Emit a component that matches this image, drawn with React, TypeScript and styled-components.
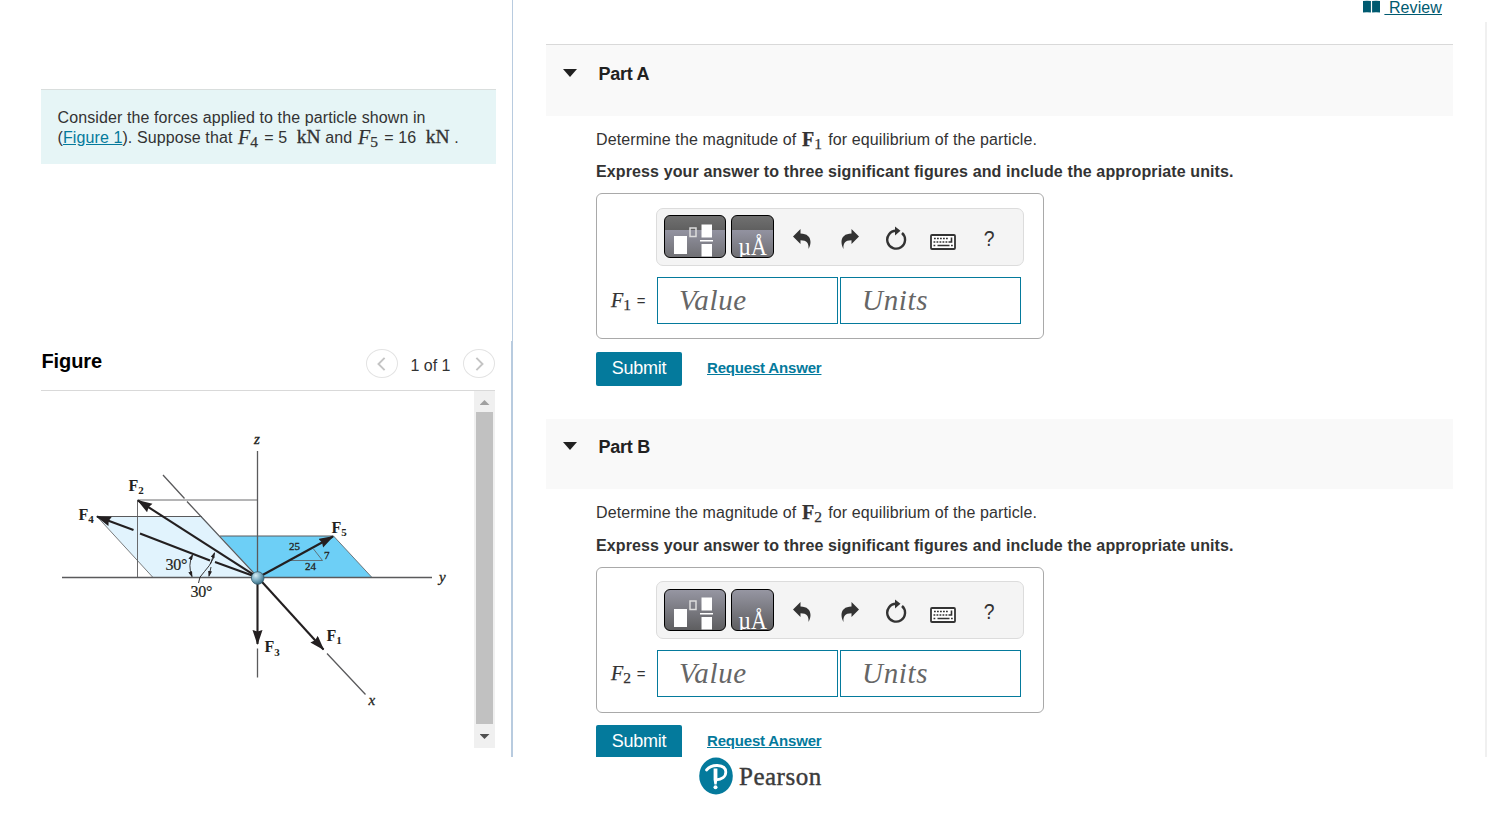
import { createGlobalStyle, styled } from 'styled-components'

const sans = `'Liberation Sans', Arial, sans-serif`
const serif = `'Liberation Serif', 'Times New Roman', serif`

const parts = [
	{ id: 'A', index: 1 },
	{ id: 'B', index: 2 },
]

function App() {
	return (
		<Page>
			<GlobalStyle />
			<Main>
				<Left>
					<Problem>
						<Statement>
							<Line>Consider the forces applied to the particle shown in</Line>
							<Line>
								(<Link href="#figure">Figure 1</Link>). Suppose that{' '}
								<Variable index={4} /> = 5 <Unit>kN</Unit> and{' '}
								<Variable index={5} /> = 16 <Unit>kN</Unit> .
							</Line>
						</Statement>
					</Problem>
					<FigurePane id="figure">
						<FigureHeader>
							<FigureTitle>Figure</FigureTitle>
							<Pager>
								<PageButton aria-label="Previous figure">
									<Chevron d="M11 2 4 9l7 7" />
								</PageButton>
								<PageCount>1 of 1</PageCount>
								<PageButton aria-label="Next figure">
									<Chevron d="M5 2l7 7-7 7" />
								</PageButton>
							</Pager>
						</FigureHeader>
						<FigureBody>
							<ForceDiagram />
							<Scrollbar>
								<Arrow $up />
								<Thumb />
								<Arrow />
							</Scrollbar>
						</FigureBody>
					</FigurePane>
				</Left>
				<Right>
					<Content>
						<ReviewRow>
							<BookIcon />
							<ReviewLink href="#review">&nbsp;Review</ReviewLink>
						</ReviewRow>
						{parts.map((part) => (
							<Part key={part.id} id={part.id} index={part.index} />
						))}
					</Content>
					<Edge />
				</Right>
			</Main>
			<Footer>
				<PearsonLogo />
				<Brand>Pearson</Brand>
			</Footer>
		</Page>
	)
}

export default App

function Variable({ index }: { index: number }) {
	return (
		<MathText>
			<i>F</i>
			<sub>{index}</sub>
		</MathText>
	)
}

function Chevron({ d }: { d: string }) {
	return (
		<svg width="14" height="16" viewBox="0 0 16 18">
			<path d={d} fill="none" stroke="#c4c4c4" strokeWidth="2.200" />
		</svg>
	)
}

function Part({ id, index }: { id: string; index: number }) {
	const first = index === 1

	return (
		<section>
			<PartHeader $first={first}>
				<svg width="14" height="8" viewBox="0 0 14 8">
					<path d="M0 0h14L7 8z" fill="#212121" />
				</svg>
				<PartTitle>Part {id}</PartTitle>
			</PartHeader>
			<PartBody>
				<Question>
					Determine the magnitude of{' '}
					<MathText>
						<b>F</b>
						<sub>{index}</sub>
					</MathText>
					&nbsp;for equilibrium of the particle.
				</Question>
				<Instruction $first={first}>
					Express your answer to three significant figures and include the
					appropriate units.
				</Instruction>
				<AnswerBox $first={first}>
					<Toolbar $first={first}>
						<ToolButton $first={first} $width={62} aria-label="Templates">
							<TemplatesIcon />
						</ToolButton>
						<ToolButton $first={first} $width={43} aria-label="Symbols">
							<span>µÅ</span>
						</ToolButton>
						<ToolIcons $first={first}>
							<UndoIcon />
							<RedoIcon />
							<ResetIcon />
							<KeyboardIcon />
							<Help>?</Help>
						</ToolIcons>
					</Toolbar>
					<Fields>
						<FieldLabel>
							<Variable index={index} /> =
						</FieldLabel>
						<Field placeholder="Value" />
						<Field placeholder="Units" />
					</Fields>
				</AnswerBox>
				<Actions $first={first}>
					<Submit>Submit</Submit>
					<RequestLink href="#answer">Request Answer</RequestLink>
				</Actions>
			</PartBody>
		</section>
	)
}

function TemplatesIcon() {
	return (
		<svg width="60" height="41" viewBox="0 0 60 41">
			<path
				fill="#fff"
				d="M9 20h13v18H9zM36.500 8.500h10.500v13H36.500zM36.500 28h10.500v12.500H36.500zM35 24h13v1.500H35z"
			/>
			<path d="M25 12h6v8.500h-6z" fill="none" stroke="#ddd" strokeWidth="1.500" />
		</svg>
	)
}

function UndoIcon() {
	return (
		<svg width="18" height="20" viewBox="0 0 18 20">
			<path
				d="M0 7.500 7.500 0v4.500C14 4.500 17.500 8 17.500 13c0 2.500-.7 4.700-2 7C16 14.500 14 11.200 7.500 11.200V15z"
				fill="#333"
			/>
		</svg>
	)
}

function RedoIcon() {
	return (
		<svg width="18" height="20" viewBox="0 0 18 20">
			<path
				d="M18 7.500 10.500 0v4.500C4 4.500.5 8 .5 13c0 2.500.7 4.700 2 7C2 14.500 4 11.200 10.500 11.200V15z"
				fill="#333"
			/>
		</svg>
	)
}

function ResetIcon() {
	return (
		<ResetSvg width="22" height="24" viewBox="0 0 22 24">
			<path
				d="M17 7A8.900 8.900 0 1 1 11 4.800"
				fill="none"
				stroke="#333"
				strokeWidth="2.400"
			/>
			<path d="M10 .5 15.500 4.800 10 9.500z" fill="#333" />
		</ResetSvg>
	)
}

function KeyboardIcon() {
	return (
		<KeyboardSvg width="26" height="16" viewBox="0 0 26 16">
			<rect x="1" y="1" width="24" height="14" rx="1" fill="#fff" stroke="#333" strokeWidth="1.800" />
			<path
				d="M4 4.500h14M3.500 8h15M3.500 11.500h2M21 11.500h2"
				stroke="#333"
				strokeWidth="1.600"
				strokeDasharray="1.800 1.200"
			/>
			<path d="M7.500 11.500h12M21.500 3.500V8h-3" fill="none" stroke="#333" strokeWidth="1.600" />
		</KeyboardSvg>
	)
}

function BookIcon() {
	return (
		<svg width="17" height="14" viewBox="0 0 17 14">
			<path
				d="M0 1Q4 .3 7.900 1V12.500Q4 12 0 12.500zM9.100 1Q13 .3 17 1v11.500q-4-.5-7.900 0z"
				fill="#005a70"
			/>
		</svg>
	)
}

function PearsonLogo() {
	return (
		<svg width="34" height="38" viewBox="0 0 34 38">
			<ellipse cx="17" cy="19" rx="16.800" ry="18.400" fill="#047a9c" />
			<path
				d="M7.500 13C10.500 9.500 14.500 8.300 18.500 8.500c5.300 .3 8.300 2.800 8.300 6.600 0 4.700-4 7.500-9.800 7.800"
				fill="none"
				stroke="#fff"
				strokeWidth="2.800"
				strokeLinecap="round"
			/>
			<path d="M14.600 11.500h3.800v11l-.8 5h-2.200l-.8-5z" fill="#fff" />
			<circle cx="16.500" cy="30.300" r="2" fill="#fff" />
		</svg>
	)
}

// Three-dimensional sketch of the particle and the five forces on it
function ForceDiagram() {
	return (
		<Diagram width="433" height="357" viewBox="41 391 433 357">
			<defs>
				<marker
					id="head"
					markerUnits="userSpaceOnUse"
					markerWidth="16"
					markerHeight="12"
					refX="14"
					refY="5"
					orient="auto"
				>
					<path d="M0 0 15 5 0 10 1.500 5z" fill="#231f20" />
				</marker>
				<marker
					id="tip"
					markerUnits="userSpaceOnUse"
					markerWidth="6"
					markerHeight="4"
					refX="5"
					refY="2"
					orient="auto-start-reverse"
				>
					<path d="M0 0 6 2 0 4z" fill="#231f20" />
				</marker>
				<radialGradient id="ball" cx=".35" cy=".3" r=".75">
					<stop offset="0" stopColor="#d6edf5" />
					<stop offset=".5" stopColor="#7fb0c5" />
					<stop offset="1" stopColor="#33687f" />
				</radialGradient>
			</defs>
			<path d="M97 516.500h105l56 61H153z" fill="#e1f3fd" />
			<path d="M220 536h113.500L372 577.500H258z" fill="#6dcff6" />
			<g fill="none" stroke="#5a5a5c" strokeWidth="1.300">
				<path d="M62 577.500h370M257.500 451v126M257.500 648.500v29" />
				<path d="M163 475l21.500 23.500M187 501.500l71 76M327 653.500l38.500 41" />
				<path d="M97 516.500h105M220 536h113.500" strokeWidth="1" />
				<path d="M137.500 577V500H257" strokeWidth=".9" />
				<path d="M97 516.500l56 61M333.500 536l38.500 41.500" strokeWidth=".8" />
				<path d="M290 560.500h32.500L313.500 549" strokeWidth=".8" />
			</g>
			<g fill="none" stroke="#231f20" strokeWidth=".9">
				<path d="M192.500 555q-5 10-.5 21.500" markerStart="url(#tip)" markerEnd="url(#tip)" />
				<path d="M214.500 553q-2.500 6-4 11M211 567l-2 9" markerStart="url(#tip)" markerEnd="url(#tip)" />
				<path d="M198.500 583q0-6 6-11.500 5-5 9-13.500" />
			</g>
			<g fill="none" stroke="#231f20" strokeWidth="2.100">
				<path d="M258 577.500 138 500.500" markerEnd="url(#head)" />
				<path d="M133.500 530 97 516.500" markerEnd="url(#head)" />
				<path d="M258 577.500l-43-15.500M210 560.500l-70-27" />
				<path d="M258 577.500 333 536.500" markerEnd="url(#head)" />
				<path d="M257.500 577.500V644" markerEnd="url(#head)" />
				<path d="M258 577.500l65.500 72" markerEnd="url(#head)" />
			</g>
			<circle cx="257.700" cy="578" r="6.300" fill="url(#ball)" stroke="#31596b" strokeWidth=".8" />
			<g fontWeight="bold">
				<text x="128.500" y="491">F<tspan fontSize="11" dy="3">2</tspan></text>
				<text x="78.500" y="519.500">F<tspan fontSize="11" dy="3.500">4</tspan></text>
				<text x="331.500" y="533">F<tspan fontSize="11" dy="2.500">5</tspan></text>
				<text x="264.500" y="651.500">F<tspan fontSize="11" dy="4">3</tspan></text>
				<text x="326.500" y="640.500">F<tspan fontSize="11" dy="3">1</tspan></text>
			</g>
			<g fontStyle="italic" fontSize="15" stroke="#231f20" strokeWidth=".3">
				<text x="254" y="443.500">z</text>
				<text x="439" y="581.500">y</text>
				<text x="368.500" y="705">x</text>
			</g>
			<g stroke="#231f20" strokeWidth=".2">
				<text x="165.500" y="569.500" textLength="22">30°</text>
				<text x="190.500" y="596.500" textLength="22">30°</text>
			</g>
			<g fontSize="11" stroke="#231f20" strokeWidth=".3">
				<text x="289" y="549.500">25</text>
				<text x="305" y="570">24</text>
				<text x="324" y="558.500">7</text>
			</g>
		</Diagram>
	)
}

const GlobalStyle = createGlobalStyle`
	* {
		box-sizing: border-box;
	}
	body {
		margin: 0;
		background: #fff;
		color: #333;
		font-family: ${sans};
		font-size: 16px;
	}
`
const Page = styled.div`
	height: 827px;
	overflow: hidden;
`
const Main = styled.main`
	display: flex;
	height: 757px;
	overflow: hidden;
`
const Left = styled.aside`
	display: flex;
	flex-direction: column;
	flex: none;
	width: 513px;
`
const Problem = styled.div`
	height: 341px;
	padding: 89px 16px 0 41px;
	border-right: 1px solid #b8cbdf;
`
const Statement = styled.div`
	height: 75px;
	padding: 18px 0 0 16.500px;
	border-top: 1px solid #d9dedd;
	background: #e6f5f6;
`
const Line = styled.div`
	height: 20px;
	line-height: 20px;
	white-space: nowrap;
	letter-spacing: 0.100px;
`
const Link = styled.a`
	color: #047a9c;
`
const MathText = styled.span`
	margin: 0 1.500px 0 1px;
	font-family: ${serif};
	font-size: 20px;
	line-height: 0;
	vertical-align: -0.500px;
	-webkit-text-stroke: 0.250px #333;
	sub {
		font-size: 15.500px;
		line-height: 0;
		vertical-align: -3px;
	}
`
const Unit = styled.span`
	margin-left: 5px;
	font-family: ${serif};
	font-size: 19.500px;
	line-height: 0;
	-webkit-text-stroke: 0.300px #333;
`
const FigurePane = styled.div`
	flex: 1;
	padding: 0 16px 0 41px;
	border-right: 2px solid #b8cbdf;
`
const FigureHeader = styled.div`
	display: flex;
	justify-content: space-between;
	height: 50px;
	border-bottom: 1px solid #d9d9d9;
`
const FigureTitle = styled.h2`
	margin: 8px 0 0 0.500px;
	color: #000;
	font-size: 20px;
	letter-spacing: -0.100px;
	line-height: 24px;
`
const Pager = styled.div`
	display: flex;
	padding-top: 8px;
`
const PageButton = styled.button`
	display: flex;
	align-items: center;
	justify-content: center;
	width: 32px;
	height: 29px;
	padding: 0;
	border: 1px solid #e3e3e3;
	border-radius: 50%;
	background: #fff;
`
const PageCount = styled.span`
	width: 65px;
	padding-top: 8px;
	line-height: 18px;
	text-align: center;
`
const FigureBody = styled.div`
	display: flex;
	height: 357px;
	margin-right: -1px;
`
const Diagram = styled.svg`
	flex: none;
	font-family: ${serif};
	font-size: 16px;
	text {
		fill: #231f20;
	}
`
const Scrollbar = styled.div`
	display: flex;
	flex-direction: column;
	align-items: center;
	justify-content: space-between;
	width: 21px;
	padding: 9px 0;
	background: #f0f0f0;
`
const Arrow = styled.span<{ $up?: boolean }>`
	width: 10px;
	height: 5px;
	background: ${(props) => (props.$up ? '#a0a0a0' : '#505050')};
	clip-path: ${(props) =>
		props.$up
			? 'polygon(50% 0, 100% 100%, 0 100%)'
			: 'polygon(0 0, 100% 0, 50% 100%)'};
`
const Thumb = styled.div`
	width: 17px;
	height: 312px;
	margin-bottom: 4px;
	background: #c1c1c1;
`
const Right = styled.div`
	display: flex;
	flex: 1;
	padding-left: 33px;
`
const Content = styled.div`
	width: 907px;
`
const Edge = styled.div`
	width: 2px;
	height: 735px;
	margin: 22px 0 0 32px;
	background: #f0f0f0;
`
const ReviewRow = styled.div`
	display: flex;
	justify-content: flex-end;
	height: 44px;
	padding-right: 11px;
`
const ReviewLink = styled.a`
	height: 18px;
	margin-left: 4px;
	color: #005a70;
	letter-spacing: 0.100px;
	line-height: 16px;
`
const PartHeader = styled.div<{ $first: boolean }>`
	display: flex;
	height: ${(props) => (props.$first ? 72 : 70)}px;
	padding: ${(props) => (props.$first ? '24px' : '23px')} 0 0 17px;
	border-top: ${(props) => (props.$first ? '1px solid #d9d9d9' : 'none')};
	background: #f9f9f9;
`
const PartTitle = styled.h3`
	margin: -5px 0 0 21.500px;
	color: #212121;
	font-size: 18px;
	letter-spacing: -0.250px;
	line-height: 20px;
`
const PartBody = styled.div`
	height: 303px;
	padding: 14px 0 0 50px;
`
const Question = styled.p`
	margin: 0;
	letter-spacing: 0.110px;
	line-height: 20px;
`
const Instruction = styled.p<{ $first: boolean }>`
	margin: ${(props) => (props.$first ? 12 : 13)}px 0 11px;
	font-weight: bold;
	letter-spacing: 0.120px;
	line-height: 20px;
`
const AnswerBox = styled.div<{ $first: boolean }>`
	width: 448px;
	height: 146px;
	padding: ${(props) => (props.$first ? 14 : 13)}px 0 0 13px;
	border: 1px solid #a9a9a9;
	border-radius: 6px;
`
const Toolbar = styled.div<{ $first: boolean }>`
	display: flex;
	width: 368px;
	height: 58px;
	margin-left: 46px;
	padding: ${(props) => (props.$first ? 6 : 7)}px 7px 0;
	border: 1px solid #dcdcdc;
	border-radius: 7px;
	background: #f4f4f4;
`
const ToolButton = styled.button<{ $width: number; $first: boolean }>`
	flex: none;
	display: flex;
	justify-content: center;
	width: ${(props) => props.$width}px;
	height: ${(props) => (props.$first ? 43 : 42)}px;
	margin-right: 5px;
	padding: 0;
	overflow: hidden;
	border: 1px solid #000;
	border-radius: 6px;
	background: ${(props) =>
		props.$first
			? 'linear-gradient(#707070, #606060 34%, #9292a0 35%, #707074)'
			: 'linear-gradient(#9696a2, #5e5e60)'};
	color: #fff;
	font-family: ${serif};
	font-size: 22px;
	line-height: 60px;
	span {
		transform: scaleY(1.120);
	}
	svg {
		flex: none;
		margin-top: ${(props) => (props.$first ? 0 : -1)}px;
	}
`
const ToolIcons = styled.div<{ $first: boolean }>`
	display: grid;
	grid-template-columns: 48px 47px 46px 47px 47px;
	align-items: center;
	justify-items: center;
	height: ${(props) => (props.$first ? 48 : 46)}px;
	margin-left: -1px;
`
const ResetSvg = styled.svg`
	margin-top: -2px;
`
const KeyboardSvg = styled.svg`
	margin-top: 5px;
`
const Help = styled.span`
	font-size: 22px;
	line-height: 24px;
	transform: scaleX(0.880);
`
const Fields = styled.div`
	display: flex;
	gap: 2px;
	margin-top: 11px;
`
const FieldLabel = styled.label`
	width: 45px;
	font-size: 15px;
	line-height: 48px;
	white-space: nowrap;
`
const Field = styled.input`
	width: 181px;
	height: 47px;
	padding: 0 21px;
	border: 1px solid #047a9c;
	outline: none;
	font: italic 29px ${serif};
	letter-spacing: 0.700px;
	&::placeholder {
		color: #666;
	}
`
const Actions = styled.div<{ $first: boolean }>`
	display: flex;
	gap: 25px;
	margin-top: ${(props) => (props.$first ? 13 : 12)}px;
`
const Submit = styled.button`
	width: 86px;
	height: 34px;
	padding: 0 0 1px;
	border: none;
	border-radius: 2px;
	background: #047a9c;
	color: #fff;
	font: 18px ${sans};
	letter-spacing: -0.250px;
`
const RequestLink = styled.a`
	padding-top: 7px;
	color: #047a9c;
	font-size: 15px;
	font-weight: bold;
	letter-spacing: -0.180px;
	line-height: 18px;
`
const Footer = styled.footer`
	display: flex;
	gap: 6px;
	padding-left: 699px;
`
const Brand = styled.span`
	color: #3b3b3b;
	font-family: ${serif};
	font-size: 25px;
	letter-spacing: 0.500px;
	line-height: 39px;
	-webkit-text-stroke: 0.400px #3b3b3b;
`
